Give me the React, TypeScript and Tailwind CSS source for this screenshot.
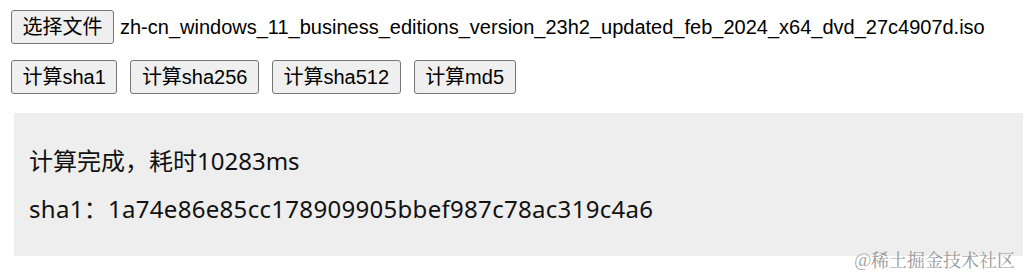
export default function App() {
  const btn =
    "h-[34px] rounded-[3px] border border-[#767676] bg-[#efefef] px-[10.5px] text-[20px] leading-none text-black";
  return (
    <main className="relative h-[277px] w-[1023px] overflow-hidden bg-white text-black [font-family:'Liberation_Sans','Noto_Sans_CJK_SC',sans-serif]">
      <div className="flex items-center pl-[11px] pt-[10px]">
        <button className={btn}>选择文件</button>
        <span className="ml-[6px] text-[20px] leading-none">
          zh-cn_windows_11_business_editions_version_23h2_updated_feb_2024_x64_dvd_27c4907d.iso
        </span>
      </div>
      <div className="mt-[16px] flex gap-[13px] pl-[11px]">
        <button className={btn}>计算sha1</button>
        <button className={btn}>计算sha256</button>
        <button className={btn}>计算sha512</button>
        <button className={btn}>计算md5</button>
      </div>
      <section className="ml-[14px] mt-[19px] h-[143px] bg-[#eeeeee] pl-[15px] pt-[24px] text-[24px] leading-[48px] text-[#111] [font-family:'Noto_Sans','Noto_Sans_CJK_SC',sans-serif]">
        <p>计算完成，耗时10283ms</p>
        <p className="tracking-[0.3px]">sha1：1a74e86e85cc178909905bbef987c78ac319c4a6</p>
      </section>
      <span className="absolute right-[8px] top-[246px] text-[18px] text-[#999] [font-family:'Noto_Serif_CJK_SC','Noto_Sans_CJK_SC',serif]">
        @稀土掘金技术社区
      </span>
    </main>
  );
}
